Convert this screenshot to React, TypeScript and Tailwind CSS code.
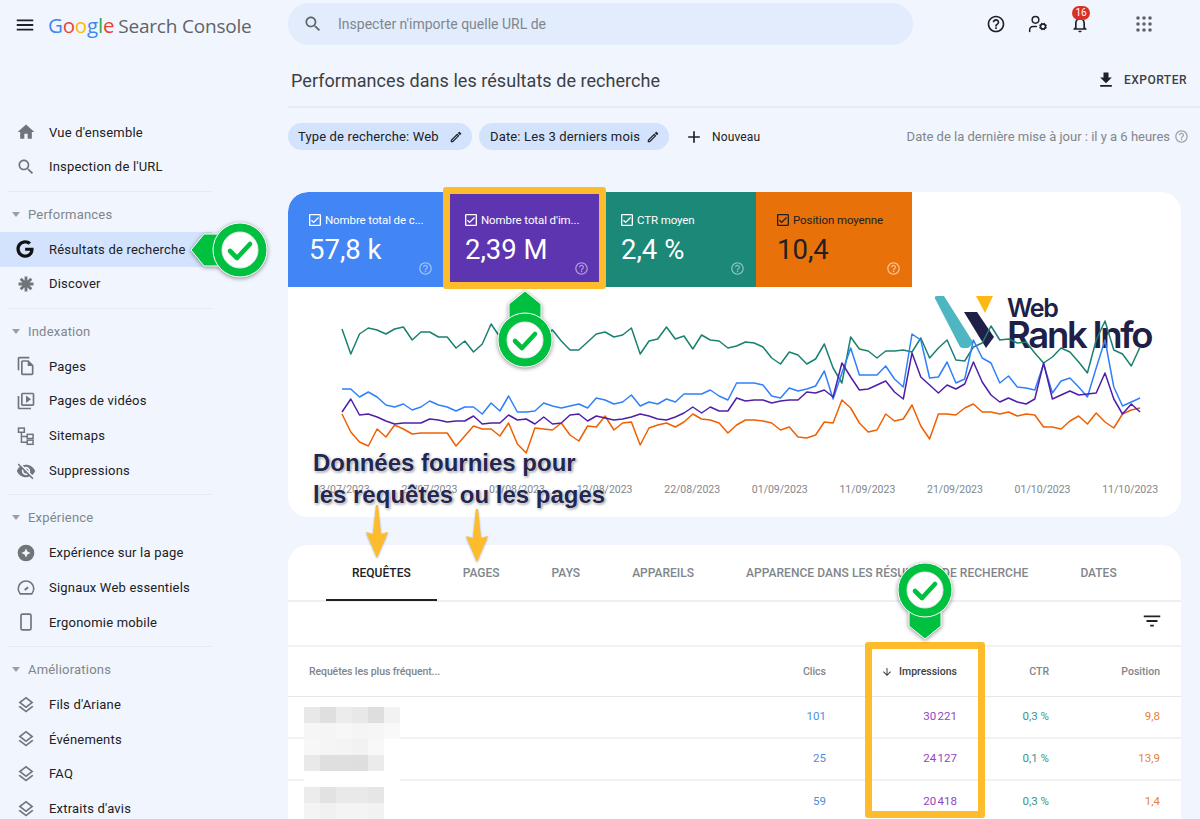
import React from "react";
import { FaGoogle } from "react-icons/fa";
import { UserCog } from "lucide-react";

const P = {
  home: "M10 20v-6h4v6h5v-8h3L12 3 2 12h3v8z",
  search:
    "M15.5 14h-.79l-.28-.27C15.41 12.59 16 11.11 16 9.5 16 5.91 13.09 3 9.5 3S3 5.91 3 9.5 5.91 16 9.5 16c1.61 0 3.09-.59 4.23-1.57l.27.28v.79l5 4.99L20.49 19l-4.99-5zm-6 0C7.01 14 5 11.99 5 9.5S7.01 5 9.5 5 14 7.01 14 9.5 11.99 14 9.5 14z",
  menu: "M3 18h18v-2H3v2zm0-5h18v-2H3v2zm0-7v2h18V6H3z",
  copy: "M16 1H4c-1.1 0-2 .9-2 2v14h2V3h12V1zm-1 4H8c-1.1 0-1.99.9-1.99 2L6 21c0 1.1.89 2 1.99 2H19c1.1 0 2-.9 2-2V11l-6-6zM8 21V7h6v5h5v9H8z",
  video:
    "M4 6H2v14c0 1.1.9 2 2 2h14v-2H4V6zm16-4H8c-1.1 0-2 .9-2 2v12c0 1.1.9 2 2 2h12c1.1 0 2-.9 2-2V4c0-1.1-.9-2-2-2zm0 14H8V4h12v12zM12 5.5v9l6-4.5z",
  eyeOff:
    "M12 7c2.76 0 5 2.24 5 5 0 .65-.13 1.26-.36 1.83l2.92 2.92c1.51-1.26 2.7-2.89 3.43-4.75-1.73-4.39-6-7.5-11-7.5-1.4 0-2.74.25-3.98.7l2.16 2.16C10.74 7.13 11.35 7 12 7zM2 4.27l2.28 2.28.46.46C3.08 8.3 1.78 10.02 1 12c1.73 4.39 6 7.5 11 7.5 1.55 0 3.03-.3 4.38-.84l.42.42L19.73 22 21 20.73 3.27 3 2 4.27zM7.53 9.8l1.55 1.55c-.05.21-.08.43-.08.65 0 1.66 1.34 3 3 3 .22 0 .44-.03.65-.08l1.55 1.55c-.67.33-1.41.53-2.2.53-2.76 0-5-2.24-5-5 0-.79.2-1.53.53-2.2zm4.31-.78l3.15 3.15.02-.16c0-1.66-1.34-3-3-3l-.17.01z",
  layers:
    "M11.99 18.54l-7.37-5.73L3 14.07l9 7 9-7-1.63-1.27-7.38 5.74zM12 16l7.36-5.73L21 9l-9-7-9 7 1.63 1.27L12 16zm0-11.47L17.74 9 12 13.47 6.26 9 12 4.53z",
  help: "M11 18h2v-2h-2v2zm1-16C6.48 2 2 6.48 2 12s4.48 10 10 10 10-4.48 10-10S17.52 2 12 2zm0 18c-4.41 0-8-3.59-8-8s3.59-8 8-8 8 3.59 8 8-3.59 8-8 8zm0-14c-2.21 0-4 1.79-4 4h2c0-1.1.9-2 2-2s2 .9 2 2c0 2-3 1.75-3 5h2c0-2.25 3-2.5 3-5 0-2.21-1.79-4-4-4z",
  bell: "M12 22c1.1 0 2-.9 2-2h-4c0 1.1.9 2 2 2zm6-6v-5c0-3.07-1.63-5.64-4.5-6.32V4c0-.83-.67-1.5-1.5-1.5s-1.5.67-1.5 1.5v.68C7.64 5.36 6 7.92 6 11v5l-2 2v1h16v-1l-2-2zm-2 1H8v-6c0-2.48 1.51-4.5 4-4.5s4 2.02 4 4.5v6z",
  download: "M19 9h-4V3H9v6H5l7 7 7-7zM5 18v2h14v-2H5z",
  pencil:
    "M3 17.25V21h3.75L17.81 9.94l-3.75-3.75L3 17.25zM5.92 19H5v-.92l9.06-9.06.92.92L5.92 19zM20.71 7.04a.996.996 0 0 0 0-1.41l-2.34-2.34a.996.996 0 0 0-1.41 0l-1.83 1.83 3.75 3.75 1.83-1.83z",
  plus: "M19 13h-6v6h-2v-6H5v-2h6V5h2v6h6v2z",
  filter: "M10 18h4v-2h-4v2zM3 6v2h18V6H3zm3 7h12v-2H6v2z",
  down: "M20 12l-1.41-1.41L13 16.17V4h-2v12.17l-5.58-5.59L4 12l8 8 8-8z",
  check: "M19 3H5a2 2 0 0 0-2 2v14a2 2 0 0 0 2 2h14a2 2 0 0 0 2-2V5a2 2 0 0 0-2-2zm0 16H5V5h14v14zM10 17l-4-4 1.4-1.4 2.6 2.6 6.6-6.6L18 9l-8 8z",
};

const Ico = ({ d, className }: { d: string; className?: string }) => (
  <svg viewBox="0 0 24 24" fill="currentColor" className={className}>
    <path d={d} />
  </svg>
);

const Discover = () => (
  <svg viewBox="0 0 24 24" className="w-[20px] h-[20px]" stroke="currentColor" strokeWidth="3.4">
    <path d="M12 3v18M3 12h18M5.6 5.6l12.8 12.8M18.4 5.6L5.6 18.4" />
  </svg>
);

const Sitemap = () => (
  <svg viewBox="0 0 24 24" className="w-[20px] h-[20px]" fill="none" stroke="currentColor" strokeWidth="1.8">
    <rect x="3" y="2.5" width="7" height="5" />
    <rect x="13.5" y="10" width="7" height="5" />
    <rect x="13.5" y="17" width="7" height="5" />
    <path d="M6.5 7.5V19.5H13.5M6.5 12.5H13.5" />
  </svg>
);

const PageExp = () => (
  <svg viewBox="0 0 24 24" className="w-[20px] h-[20px]">
    <circle cx="12" cy="12" r="10" fill="currentColor" />
    <path d="M12 6.5l1.7 3.8 3.8 1.7-3.8 1.7-1.7 3.8-1.7-3.8L6.5 12l3.8-1.7z" fill="#f1f5fd" />
  </svg>
);

const Gauge = () => (
  <svg viewBox="0 0 24 24" className="w-[20px] h-[20px]" fill="none" stroke="currentColor" strokeWidth="1.9">
    <path d="M5 19a9.3 9.3 0 1 1 14 0z" />
    <path d="M10.5 14.5l4-3.5" strokeWidth="2.4" />
  </svg>
);

const Phone = () => (
  <svg viewBox="0 0 24 24" className="w-[20px] h-[20px]" fill="none" stroke="currentColor" strokeWidth="2">
    <rect x="6" y="2.5" width="12" height="19" rx="1.8" />
  </svg>
);

const ic = "w-[20px] h-[20px]";

const groups = [
  {
    items: [
      { icon: <Ico d={P.home} className={ic} />, label: "Vue d'ensemble" },
      { icon: <Ico d={P.search} className={ic} />, label: "Inspection de l'URL" },
    ],
  },
  {
    title: "Performances",
    items: [
      { icon: <FaGoogle className="w-[18px] h-[18px] text-[#111]" />, label: "Résultats de recherche", active: true },
      { icon: <Discover />, label: "Discover" },
    ],
  },
  {
    title: "Indexation",
    items: [
      { icon: <Ico d={P.copy} className={ic} />, label: "Pages" },
      { icon: <Ico d={P.video} className={ic} />, label: "Pages de vidéos" },
      { icon: <Sitemap />, label: "Sitemaps" },
      { icon: <Ico d={P.eyeOff} className={ic} />, label: "Suppressions" },
    ],
  },
  {
    title: "Expérience",
    items: [
      { icon: <PageExp />, label: "Expérience sur la page" },
      { icon: <Gauge />, label: "Signaux Web essentiels" },
      { icon: <Phone />, label: "Ergonomie mobile" },
    ],
  },
  {
    title: "Améliorations",
    items: [
      { icon: <Ico d={P.layers} className={ic} />, label: "Fils d'Ariane" },
      { icon: <Ico d={P.layers} className={ic} />, label: "Événements" },
      { icon: <Ico d={P.layers} className={ic} />, label: "FAQ" },
      { icon: <Ico d={P.layers} className={ic} />, label: "Extraits d'avis" },
    ],
  },
];

const Sidebar = () => (
  <aside className="w-[288px] shrink-0">
    <div className="flex items-center h-[50px] pl-[14px]">
      <Ico d={P.menu} className="w-[22px] h-[22px] text-[#202124]" />
      <div className="ml-[12px] text-[20.5px] tracking-[-0.2px] text-[#5f6368] whitespace-nowrap font-['Open_Sans',sans-serif]">
        <span className="text-[#4285f4]">G</span>
        <span className="text-[#ea4335]">o</span>
        <span className="text-[#fbbc05]">o</span>
        <span className="text-[#4285f4]">g</span>
        <span className="text-[#34a853]">l</span>
        <span className="text-[#ea4335]">e</span>
        <span className="ml-[4px] text-[19px]">Search Console</span>
      </div>
    </div>
    <div className="pt-[64.9px] w-[212px]">
      {groups.map((g, i) => (
        <div key={i} className={i < groups.length - 1 ? "pb-[6.3px]" : ""}>
          {g.title && (
            <div className="border-t border-[#e6e9ee] ml-[7px] h-[41.1px] pt-[14px] flex items-start text-[13px] leading-[17px] tracking-[0.2px] text-[#80868b]">
              <span className="w-0 h-0 mt-[6px] ml-[5px] mr-[8px] border-x-[4px] border-x-transparent border-t-[5px] border-t-[#9aa0a6]" />
              {g.title}
            </div>
          )}
          {g.items.map((it) => (
            <div
              key={it.label}
              className={`flex items-center h-[34.8px] text-[13px] tracking-[0.2px] text-[#202124] whitespace-nowrap ${
                it.active ? "bg-[#d3e3fd]" : ""
              }`}
            >
              <span className="w-[49px] pl-[16px] text-[#70757a] flex">{it.icon}</span>
              {it.label}
            </div>
          ))}
        </div>
      ))}
    </div>
  </aside>
);

const HelpSm = ({ className }: { className: string }) => <Ico d={P.help} className={`w-[15px] h-[15px] ${className}`} />;

const tiles = [
  { bg: "bg-[#4285f4]", label: "Nombre total de c...", value: "57,8 k", tone: "text-white", q: "text-white/50", round: "rounded-tl-[20px]" },
  { bg: "bg-[#5e35b1]", label: "Nombre total d'im...", value: "2,39 M", tone: "text-white", q: "text-white/50", round: "" },
  { bg: "bg-[#1b8878]", label: "CTR moyen", value: "2,4 %", tone: "text-white", q: "text-white/50", round: "" },
  { bg: "bg-[#e8710a]", label: "Position moyenne", value: "10,4", tone: "text-[#202124]", q: "text-white/60", round: "" },
];

const green = [
  329, 354, 334, 328, 330, 334, 329, 327, 340, 332, 332, 337, 337, 348, 341, 352, 344, 324, 337, 340, 345, 350, 345, 335, 330, 341, 350, 350, 342, 334, 332,
  337, 335, 328, 354, 341, 339, 327, 339, 336, 349, 335, 340, 341, 348, 346, 342, 343, 347, 358, 364, 352, 355, 364, 359, 344, 368, 383, 337, 349, 351, 358,
  351, 351, 350, 352, 338, 358, 348, 340, 360, 361, 347, 343, 326, 340, 339, 343, 342, 353, 363, 357, 348, 352, 362, 373, 340, 321, 350, 354, 366, 347,
];
const blue = [
  389, 389, 397, 392, 397, 405, 407, 404, 410, 407, 401, 405, 407, 411, 407, 407, 414, 403, 411, 396, 412, 412, 411, 403, 406, 408, 406, 404, 408, 398, 400,
  404, 402, 395, 406, 402, 404, 399, 402, 394, 394, 394, 390, 396, 400, 383, 383, 383, 385, 396, 398, 388, 391, 389, 386, 371, 399, 373, 348, 375, 375, 375,
  366, 379, 387, 334, 340, 378, 377, 362, 383, 379, 340, 358, 363, 383, 376, 387, 388, 390, 364, 393, 381, 378, 387, 397, 368, 340, 387, 406, 402, 398,
];
const purple = [
  412, 399, 415, 414, 417, 421, 424, 423, 423, 423, 419, 420, 422, 421, 421, 416, 424, 423, 423, 415, 420, 419, 424, 417, 424, 423, 415, 414, 421, 416, 418,
  420, 419, 417, 414, 416, 419, 420, 417, 413, 407, 413, 407, 411, 411, 398, 401, 400, 400, 403, 401, 400, 400, 392, 393, 390, 397, 363, 377, 390, 389, 385,
  381, 392, 399, 353, 377, 385, 393, 385, 389, 384, 362, 382, 395, 402, 398, 402, 404, 399, 363, 399, 395, 391, 395, 394, 393, 373, 399, 414, 404, 412,
];
const orange = [
  414, 432, 442, 446, 429, 437, 425, 429, 434, 433, 433, 433, 433, 446, 436, 426, 429, 429, 436, 423, 444, 453, 428, 429, 430, 423, 435, 441, 426, 427, 416,
  430, 423, 422, 445, 428, 425, 423, 427, 422, 414, 419, 420, 423, 433, 425, 420, 420, 421, 423, 430, 427, 437, 438, 435, 422, 423, 400, 408, 423, 432, 430,
  414, 421, 419, 405, 426, 439, 414, 414, 415, 408, 404, 412, 412, 414, 412, 416, 414, 415, 427, 427, 429, 421, 416, 424, 413, 422, 428, 414, 410, 408,
];
const toPoints = (ys: number[]) => ys.map((y, i) => `${(342 + i * 8.77).toFixed(1)},${y}`).join(" ");

const dates = ["13/07/2023", "23/07/2023", "02/08/2023", "12/08/2023", "22/08/2023", "01/09/2023", "11/09/2023", "21/09/2023", "01/10/2023", "11/10/2023"];

const Logo = () => (
  <div className="absolute left-[646px] top-[104px] flex text-[#1e2048]">
    <svg width="62" height="54" viewBox="0 0 62 54" className="shrink-0">
      <path d="M1 2.5Q0 0 3 0H10L39 46Q36 52 33 52H29Q26 52 25 49z" fill="#4db6c0" />
      <path d="M30 16H43L60 41L52 52z" fill="#1e2048" />
      <path d="M42 0H59L51 17z" fill="#fdb813" />
    </svg>
    <div className="ml-[12px] -translate-x-[1px] font-['Inter',sans-serif] font-semibold leading-none">
      <div className="text-[25px] tracking-[-1.4px] h-[24px] leading-[24px]">Web</div>
      <div className="text-[36.5px] tracking-[-2.3px] h-[30px] leading-[30px] whitespace-nowrap">Rank Info</div>
    </div>
  </div>
);

const ChartCard = () => (
  <section className="relative bg-white rounded-[20px] h-[325px] overflow-hidden">
    <div className="flex h-[95px]">
      {tiles.map((t) => (
        <div key={t.label} className={`relative w-[156px] ${t.bg} ${t.tone} ${t.round} pl-[21px] pt-[20px]`}>
          <div className="flex items-center text-[11.5px] tracking-[-0.1px] leading-[14px]">
            <Ico d={P.check} className="w-[16px] h-[16px] -ml-[2px] mr-[2px]" />
            <span>{t.label}</span>
          </div>
          <div className="text-[27.5px] leading-[32px] mt-[6px]">{t.value}</div>
          <HelpSm className={`absolute right-[11px] bottom-[11px] ${t.q}`} />
        </div>
      ))}
    </div>
    <Logo />
    <svg viewBox="288 287 893 193" className="relative w-[893px] h-[193px] block" fill="none" strokeWidth="1.5" strokeLinejoin="round">
      <polyline points={toPoints(green)} stroke="#1a8170" />
      <polyline points={toPoints(orange)} stroke="#ee6002" />
      <polyline points={toPoints(blue)} stroke="#2f80fb" />
      <polyline points={toPoints(purple)} stroke="#4f1fa8" />
    </svg>
    <div className="grid grid-cols-[repeat(10,87.6px)] pl-[10px] text-center text-[10.5px] leading-[20px] text-[#80868b]">
      {dates.map((d) => (
        <span key={d}>{d}</span>
      ))}
    </div>
  </section>
);

const tabs = ["REQUÊTES", "PAGES", "PAYS", "APPAREILS", "APPARENCE DANS LES RÉSULTATS DE RECHERCHE", "DATES"];

const rows = [
  { c: "101", i: "30\u202f221", t: "0,3 %", p: "9,8" },
  { c: "25", i: "24\u202f127", t: "0,1 %", p: "13,9" },
  { c: "59", i: "20\u202f418", t: "0,3 %", p: "1,4" },
];

const TableCard = () => (
  <section className="bg-white rounded-t-[20px] mt-[28px]">
    <div className="flex pl-[38px] h-[57px] border-b-2 border-[#eeeff1]">
      {tabs.map((t, i) => (
        <div
          key={t}
          className={`px-[26px] pt-[21px] text-[12px] leading-[14px] font-medium whitespace-nowrap h-[56px] ${
            i === 0 ? "text-[#202124] border-b-2 border-[#202124]" : "text-[#80868b]"
          } ${i === 4 ? "tracking-[0.05px]" : ""}`}
        >
          {t}
        </div>
      ))}
    </div>
    <div className="flex items-center justify-end pr-[18px] pb-[5px] h-[45px] border-b-2 border-[#f1f2f3]">
      <Ico d={P.filter} className="w-[22px] h-[22px] text-[#202124]" />
    </div>
    <div className="flex items-center h-[50px] border-b border-[#e6e7e9] text-[10.5px] font-medium text-[#80868b] pr-[21px]">
      <span className="flex-1 pl-[21px] tracking-[-0.1px]">Requêtes les plus fréquent...</span>
      <span className="w-[60px] text-right">Clics</span>
      <span className="w-[131px] flex justify-end items-center text-[#3c4043]">
        <Ico d={P.down} className="w-[12px] h-[12px] mr-[6px]" />
        Impressions
      </span>
      <span className="w-[92px] text-right">CTR</span>
      <span className="w-[111px] text-right">Position</span>
    </div>
    {rows.map((r, i) => (
      <div key={r.c} className={`flex items-center h-[42px] text-[11.5px] pr-[21px] pb-[1px] ${i < 2 ? "border-b-2 border-[#f1f2f3]" : ""}`}>
        <span className="flex-1" />
        <span className="w-[60px] text-right text-[#4b8fe2]">{r.c}</span>
        <span className="w-[131px] text-right text-[#9146bd]">{r.i}</span>
        <span className="w-[92px] text-right text-[#3d9483]">{r.t}</span>
        <span className="w-[111px] text-right text-[#e8823a]">{r.p}</span>
      </div>
    ))}
  </section>
);

const Main = () => (
  <main className="flex-1 min-w-0">
    <div className="flex items-center h-[48px]">
      <div className="flex items-center w-[625px] h-[42px] rounded-full bg-[#e2ecfc] text-[14px] text-[#80868b]">
        <Ico d={P.search} className="w-[20px] h-[20px] ml-[15px] mr-[15px] text-[#5f6368]" />
        Inspecter n'importe quelle URL de
      </div>
      <Ico d={P.help} className="w-[20px] h-[20px] ml-[73px] text-[#202124]" />
      <UserCog className="w-[20px] h-[20px] ml-[22px] text-[#202124]" strokeWidth={1.8} />
      <span className="relative ml-[22px] flex">
        <Ico d={P.bell} className="w-[20px] h-[20px] text-[#202124]" />
        <span className="absolute -top-[8px] left-[2px] w-[18px] h-[14px] rounded-full bg-[#d93025] text-white text-[10px] leading-[14px] text-center">16</span>
      </span>
      <svg viewBox="0 0 16 16" className="w-[16px] h-[16px] ml-[46px] text-[#5f6368]" fill="currentColor">
        {[2, 8, 14].flatMap((y) => [2, 8, 14].map((x) => <circle key={`${x}-${y}`} cx={x} cy={y} r="1.8" />))}
      </svg>
    </div>
    <div className="flex items-center justify-between h-[60px] pt-[6px] border-b-2 border-[#e8ebf0] pl-[3px] pr-[13px] text-[#202124]">
      <span className="text-[18px] tracking-[0.05px] text-[#3c4043]">Performances dans les résultats de recherche</span>
      <span className="flex items-center text-[12px] font-medium tracking-[0.5px] text-[#3c4043]">
        <Ico d={P.download} className="w-[20px] h-[20px] mr-[8px] text-[#202124]" />
        EXPORTER
      </span>
    </div>
    <div className="flex items-center h-[55px] pt-[2px] text-[13px] tracking-[0.15px] text-[#202124]">
      <span className="flex items-center justify-between h-[27px] w-[184px] rounded-full bg-[#d3e3fd] pl-[10px] pr-[9px]">
        Type de recherche: Web
        <Ico d={P.pencil} className="w-[14px] h-[14px]" />
      </span>
      <span className="flex items-center justify-between h-[27px] w-[190px] rounded-full bg-[#d3e3fd] pl-[11px] pr-[9px] ml-[7px]">
        Date: Les 3 derniers mois
        <Ico d={P.pencil} className="w-[14px] h-[14px]" />
      </span>
      <Ico d={P.plus} className="w-[20px] h-[20px] ml-[15px] mr-[8px]" />
      <span className="text-[12px]">Nouveau</span>
      <span className="ml-auto flex items-center pr-[11px] text-[13px] tracking-normal text-[#80868b]">
        Date de la dernière mise à jour : il y a 6 heures
        <Ico d={P.help} className="w-[15px] h-[15px] ml-[4px] text-[#9aa0a6]" />
      </span>
    </div>
    <div className="pt-[29px] pr-[19px]">
      <ChartCard />
      <TableCard />
    </div>
  </main>
);

const pinPose = {
  left: "rotate(90)",
  up: "rotate(180)",
  down: "rotate(0)",
};

const Pin = ({ dir, className }: { dir: keyof typeof pinPose; className: string }) => (
  <svg viewBox="-60 -60 120 120" className={`absolute w-[120px] h-[120px] drop-shadow-[0_1px_2px_rgba(0,0,0,0.45)] ${className}`}>
    <g transform={pinPose[dir]}>
      <path d="M-16 0V36L0 49L16 36V0z" fill="#00c13f" stroke="#fff" strokeWidth="1" />
    </g>
    <circle r="27" fill="#00c13f" stroke="#fff" strokeWidth="1" />
    <circle r="18" fill="#fff" stroke="#e8e8e8" strokeWidth="1" />
    <path d="M-10 1L-3 8L10 -6" fill="none" stroke="#00c13f" strokeWidth="4.6" strokeLinecap="round" strokeLinejoin="round" />
  </svg>
);

const Arrow = ({ className }: { className: string }) => (
  <svg viewBox="0 0 24 56" className={`absolute w-[24px] h-[56px] drop-shadow-[0_1px_1px_rgba(0,0,0,0.3)] ${className}`}>
    <path d="M11 1H13L16 30L23 28L12 54L1 28L8 30z" fill="#fdbc2c" />
  </svg>
);

// pixelated block over the query names
const blur = [
  ["bg-[#e8e8e8]", "bg-[#dfdfdf]", "bg-[#ececec]", "bg-[#e8e8e8]", "bg-[#dedede]", "bg-[#f2f2f2]"],
  ["bg-[#f6f6f6]", "bg-[#f5f5f5]", "bg-[#f7f7f7]", "bg-[#f5f5f5]", "bg-[#f6f6f6]", "bg-[#f9f9f9]"],
  ["bg-[#f7f7f7]", "bg-[#f5f5f5]", "bg-[#f4f4f4]", "bg-[#f2f2f2]", "bg-[#f8f8f8]", "bg-white"],
  ["bg-[#e9e9e9]", "bg-[#dfdfdf]", "bg-[#dfdfdf]", "bg-[#dedede]", "bg-[#ebebeb]", "bg-white"],
  ["bg-white", "bg-white", "bg-white", "bg-white", "bg-white", "bg-white"],
  ["bg-[#ececec]", "bg-[#e2e2e2]", "bg-[#e9e9e9]", "bg-[#e9e9e9]", "bg-[#e6e6e6]", "bg-white"],
  ["bg-[#f4f4f4]", "bg-[#f1f1f1]", "bg-[#f4f4f4]", "bg-[#f4f4f4]", "bg-[#f2f2f2]", "bg-white"],
];

const Blur = () => (
  <div className="absolute left-[304px] top-[707px] w-[96px]">
    {blur.map((row, i) => (
      <div key={i} className="flex h-[16px]">
        {row.map((c, j) => (
          <span key={j} className={`w-[16px] ${c}`} />
        ))}
      </div>
    ))}
  </div>
);

const Annotations = () => (
  <>
    <Blur />
    <div className="absolute left-[443px] top-[187px] w-[163px] h-[102px] border-[7px] border-[#fdbc2c] rounded-[3px]" />
    <div className="absolute left-[865px] top-[642px] w-[120px] h-[176px] border-[7px] border-[#fdbc2c] rounded-[3px]" />
    <Pin dir="left" className="left-[180px] top-[190px]" />
    <Pin dir="up" className="left-[465px] top-[280px]" />
    <Pin dir="down" className="left-[865px] top-[530px]" />
    <Arrow className="left-[365px] top-[504px]" />
    <Arrow className="left-[465px] top-[508px]" />
    <div className="absolute left-[313px] top-[447px] font-['Liberation_Sans',sans-serif] font-bold text-[24px] leading-[32px] text-[#23264f] whitespace-nowrap [text-shadow:0_0_2px_#fff,0_0_2px_#fff,1px_1px_3px_rgba(0,0,0,0.6)]">
      Données fournies pour
      <br />
      les requêtes ou les pages
    </div>
  </>
);

export default function App() {
  return (
    <div className="relative flex h-[819px] w-[1200px] overflow-hidden bg-[#f1f5fd] font-['Roboto',sans-serif]">
      <Sidebar />
      <Main />
      <Annotations />
    </div>
  );
}
